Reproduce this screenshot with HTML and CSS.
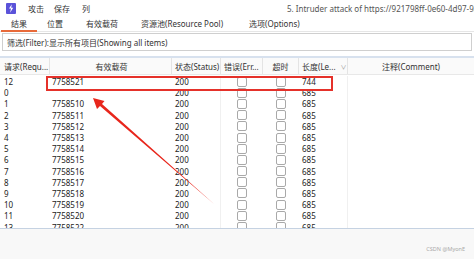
FILE: index.html
```html
<!DOCTYPE html>
<html>
<head>
<meta charset="utf-8">
<link rel="stylesheet" href="styles.css">
</head>
<body>
<div class="app">
  <div class="menubar">
    <span class="logo"><svg width="10" height="11" viewBox="0 0 10 11"><rect width="10" height="11" rx="1" fill="#5a52d9"/><path d="M5.8 1.2 L3 5.6 H5 L4.1 9.8 L7.2 4.8 H5.2 Z" fill="#fff"/></svg></span>
    <span class="menu m1">攻击</span>
    <span class="menu m2">保存</span>
    <span class="menu m3">列</span>
    <span class="title">5. Intruder attack of https://921798ff-0e60-4d97-9a8b-0c1d2e3f4a5b</span>
  </div>
  <div class="tabs">
    <span class="tab active">结果</span>
    <span class="tab t2">位置</span>
    <span class="tab t3">有效载荷</span>
    <span class="tab t4">资源池(Resource Pool)</span>
    <span class="tab t5">选项(Options)</span>
  </div>
  <div class="filter">筛选(Filter):显示所有项目(Showing all items)</div>
  <div class="table">
    <div class="row head">
      <div class="c c1">请求(Requ...</div>
      <div class="c c2 center">有效载荷</div>
      <div class="c c3">状态(Status)</div>
      <div class="c c4">错误(Err...</div>
      <div class="c c5 center">超时</div>
      <div class="c c6">长度(Le...<span class="chev">∨</span></div>
      <div class="c c7 center">注释(Comment)</div>
    </div>
    <div class="body" id="body"></div>
  </div>
  <div class="footer"><span class="wm">CSDN @MyonE</span></div>
  <div class="hl"></div>
  <svg class="arrow" width="474" height="259" viewBox="0 0 474 259">
    <polygon points="93,98 104.5,101 102,104 214,204 100,106 97,109" fill="#e8261c"/>
  </svg>
</div>
<script>
var rows=[["12","7758521","200","744"],["0","","200","685"]];
for(var i=1;i<=11;i++){rows.push([String(i),String(7758509+i),"200","685"]);}
rows.push(["13","7758522","200","685"]);
var html="";
rows.forEach(function(r){
  html+='<div class="row"><div class="c c1">'+r[0]+'</div><div class="c c2">'+r[1]+'</div><div class="c c3">'+r[2]+'</div><div class="c c4 center"><span class="cb"></span></div><div class="c c5 center"><span class="cb"></span></div><div class="c c6">'+r[3]+'</div><div class="c c7"></div></div>';
});
document.getElementById("body").innerHTML=html;
</script>
</body>
</html>
```
FILE: styles.css
```css
* { box-sizing: border-box; margin: 0; padding: 0; }
html, body { width: 474px; height: 259px; overflow: hidden; background: #fff; }
body {
  font-family: "Noto Sans", "Noto Sans CJK SC", sans-serif;
  font-size: 8px;
  color: #222;
}
.app { position: relative; width: 474px; height: 259px; overflow: hidden; display: flex; flex-direction: column; }
.menubar { height: 16px; display: flex; align-items: center; white-space: nowrap; overflow: hidden; flex: none; }
.logo { margin-left: 6px; display: flex; }
.menu { color: #333; }
.m1 { margin-left: 12px; }
.m2 { margin-left: 10px; }
.m3 { margin-left: 12px; }
.title { margin-left: 197px; color: #555; }
.tabs { height: 16px; display: flex; align-items: center; flex: none; border-bottom: 1px solid #e6e6e6; }
.tab { height: 16px; display: flex; align-items: center; color: #333; }
.tab.active { padding: 2px 10px 0 10px; margin-left: 1px; border-bottom: 2px solid #e86a3a; }
.t2 { margin-left: 10px; }
.t3 { margin-left: 23px; }
.t4 { margin-left: 23px; }
.t5 { margin-left: 26px; }
.filter {
  flex: none;
  margin: 1px 2px 0 2px;
  height: 18px;
  border: 1px solid #cfcfcf;
  display: flex; align-items: center;
  padding-left: 4px;
  color: #333;
}
.table { flex: none; margin-top: 5px; height: 172px; overflow: hidden; }
.row { display: flex; height: 11.2px; align-items: center; white-space: nowrap; }
.row.head { height: 19px; background: #fafafa; border-top: 2px solid #d7e1ee; border-bottom: 1px solid #e8e8e8; margin-bottom: 1px; color: #333; }
.c { height: 100%; display: flex; align-items: center; overflow: hidden; }
.center { justify-content: center; }
.c1 { width: 50px; padding-left: 4px; }
.c2 { width: 122px; padding-left: 2px; }
.c3 { width: 49px; padding-left: 3px; border-right: 1px solid #f0f0f0; }
.c4 { width: 42px; }
.c5 { width: 36px; }
.c6 { width: 49px; padding-left: 3px; border-right: 1px solid #f0f0f0; }
.c7 { width: 126px; }
.head .c { border-right: 1px solid #e4e4e4; }
.head .c4 { padding-left: 3px; }
.head .c7 { border-right: none; }
.chev { color: #999; font-size: 6px; margin-left: 5px; }
.cb { width: 10px; height: 10px; border: 1px solid #a9a9a9; border-radius: 2px; background: #fff; }
.footer { flex: 1; background: #f8f8f8; border-top: 1px solid #c5d2e2; position: relative; }
.wm { position: absolute; right: 9px; bottom: 6px; font-size: 5.5px; color: #a8a8a8; }
.hl { position: absolute; left: 46px; top: 76px; width: 287px; height: 15px; border: 2px solid #e5312a; }
.arrow { position: absolute; left: 0; top: 0; pointer-events: none; }
```
